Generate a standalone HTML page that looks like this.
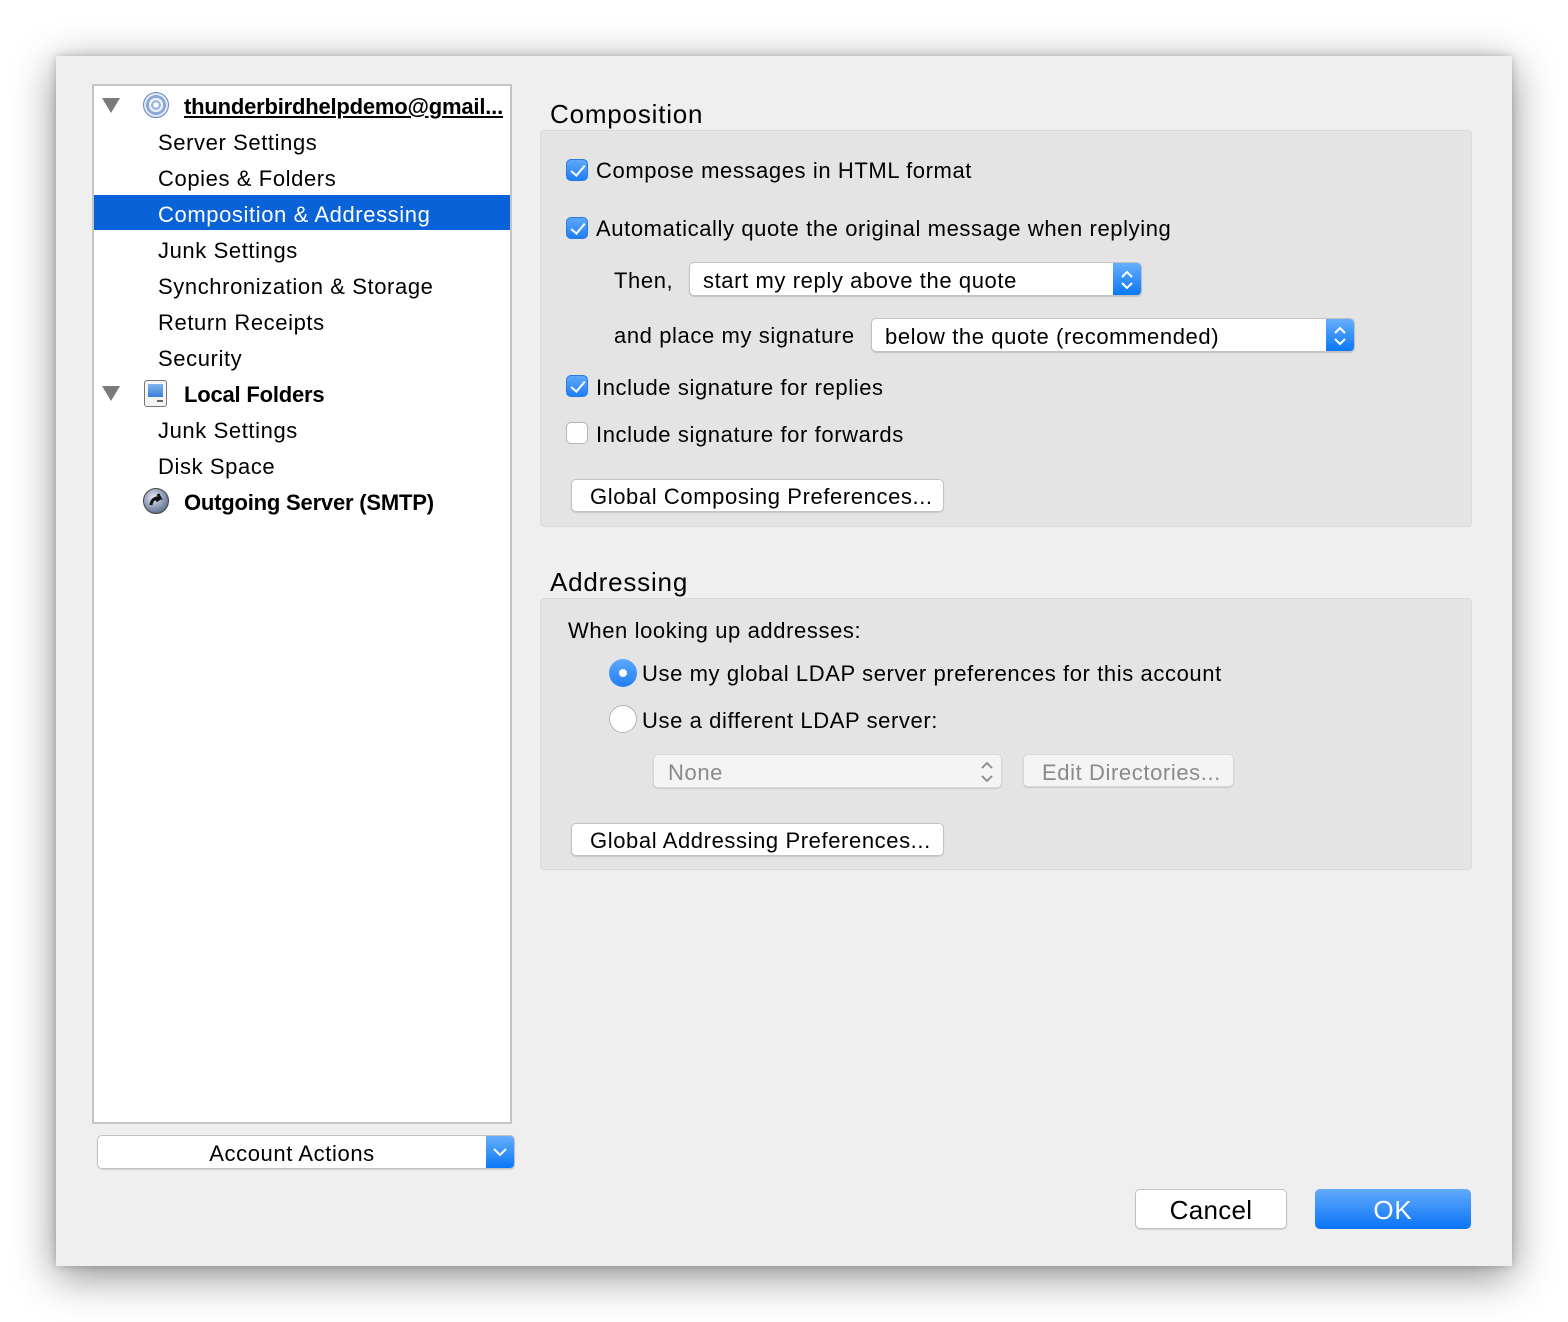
<!DOCTYPE html>
<html><head><meta charset="utf-8"><style>
*{margin:0;padding:0;box-sizing:border-box}
body{width:1568px;height:1322px;background:#fff;position:relative;overflow:hidden;font-family:"Liberation Sans",sans-serif;color:#000}
.win{position:absolute;left:56px;top:56px;width:1456px;height:1210px;background:#efefef;box-shadow:0 10px 40px rgba(0,0,0,.45),0 0 8px rgba(0,0,0,.2)}
.t{position:absolute;font-size:22px;line-height:26px;white-space:nowrap;letter-spacing:0.6px;margin-top:1px}
.b{font-weight:bold;letter-spacing:-0.2px}
.h{font-size:26px;line-height:30px;letter-spacing:0.8px}
.tree{position:absolute;left:92px;top:84px;width:420px;height:1040px;background:#fff;border:2px solid #c4c4c4}
.sel{position:absolute;left:94px;top:195px;width:416px;height:35px;background:#0a62d9}
.grp{position:absolute;background:#e4e4e4;border:1px solid #dadada;border-radius:4px}
.cb{position:absolute;width:22px;height:22px;border-radius:5px;background:#fff;border:1px solid #b5b5b5}
.cb.on{background:linear-gradient(#5fa7fb,#1e7ef8);border-color:#2a7ae6}
.cb.on::after{content:"";position:absolute;left:7px;top:2px;width:6px;height:12px;border:solid #fff;border-width:0 2.5px 2.5px 0;transform:rotate(40deg)}
.btn{position:absolute;background:#fff;border:1px solid #c2c2c2;border-radius:5px;box-shadow:0 1px 1px rgba(0,0,0,.12)}
.pop{position:absolute;background:#fff;border:1px solid #c2c2c2;border-radius:5px;box-shadow:0 1px 1px rgba(0,0,0,.15);overflow:hidden}
.arr{position:absolute;right:0;top:0;bottom:0;width:28px;background:linear-gradient(#66aefc,#0a77f7)}
.tri{position:absolute;width:0;height:0;border-left:9px solid transparent;border-right:9px solid transparent;border-top:15px solid #7a7a7a}
</style></head><body>
<div class="win"></div>
<div class="tree"></div>
<div class="sel"></div>

<div class="tri" style="left:102px;top:98px"></div>
<div style="position:absolute;left:143px;top:92px;width:26px;height:26px;border-radius:50%;background:radial-gradient(circle,#fff 0 15%,#9cb6e0 16% 28%,#e8effa 29% 42%,#8aa7d8 43% 58%,#dfe8f7 59% 72%,#7b98cc 73%);border:1px solid #6c86b8"></div>
<div class="t b" style="left:184px;top:93px;text-decoration:underline">thunderbirdhelpdemo@gmail...</div>
<div class="t" style="left:158px;top:129px">Server Settings</div>
<div class="t" style="left:158px;top:165px">Copies &amp; Folders</div>
<div class="t" style="left:158px;top:201px;color:#fff">Composition &amp; Addressing</div>
<div class="t" style="left:158px;top:237px">Junk Settings</div>
<div class="t" style="left:158px;top:273px">Synchronization &amp; Storage</div>
<div class="t" style="left:158px;top:309px">Return Receipts</div>
<div class="t" style="left:158px;top:345px">Security</div>
<div class="tri" style="left:102px;top:386px"></div>
<div style="position:absolute;left:144px;top:380px;width:23px;height:27px;border:1px solid #777;border-radius:3px;background:#f4f4f4"><div style="position:absolute;left:3px;top:3px;width:15px;height:13px;background:linear-gradient(#7fb3ee,#3a7fd8)"></div><div style="position:absolute;right:3px;bottom:4px;width:6px;height:2px;background:#666"></div></div>
<div class="t b" style="left:184px;top:381px">Local Folders</div>
<div class="t" style="left:158px;top:417px">Junk Settings</div>
<div class="t" style="left:158px;top:453px">Disk Space</div>
<div style="position:absolute;left:143px;top:488px;width:26px;height:26px;border-radius:50%;background:radial-gradient(circle at 40% 35%,#e4e9f2,#7a8aa6 60%,#3d4a63);border:1px solid #444"><svg width="24" height="24" style="position:absolute;left:0;top:0"><path d="M7 16 Q8 8 16 9 L14 5 M16 9 L12 12" stroke="#111" stroke-width="3" fill="none"/></svg></div>
<div class="t b" style="left:184px;top:489px">Outgoing Server (SMTP)</div>

<div class="btn" style="left:97px;top:1135px;width:418px;height:34px;overflow:hidden"><div class="arr" style="width:28px"><svg width="28" height="34"><path d="M8 13 L14 19 L20 13" stroke="#fff" stroke-width="2" fill="none"/></svg></div></div>
<div class="t" style="left:97px;top:1140px;width:390px;text-align:center">Account Actions</div>

<div class="t h" style="left:550px;top:98px">Composition</div>
<div class="grp" style="left:540px;top:130px;width:932px;height:397px"></div>
<div class="cb on" style="left:566px;top:159px"></div>
<div class="t" style="left:596px;top:157px">Compose messages in HTML format</div>
<div class="cb on" style="left:566px;top:217px"></div>
<div class="t" style="left:596px;top:215px">Automatically quote the original message when replying</div>
<div class="t" style="left:614px;top:267px">Then,</div>
<div class="pop" style="left:689px;top:262px;width:453px;height:34px"><div class="arr"><svg width="28" height="34"><path d="M9 14 L14 9 L19 14 M9 20 L14 25 L19 20" stroke="#fff" stroke-width="2" fill="none"/></svg></div></div>
<div class="t" style="left:703px;top:267px">start my reply above the quote</div>
<div class="t" style="left:614px;top:322px">and place my signature</div>
<div class="pop" style="left:871px;top:318px;width:484px;height:34px"><div class="arr"><svg width="28" height="34"><path d="M9 14 L14 9 L19 14 M9 20 L14 25 L19 20" stroke="#fff" stroke-width="2" fill="none"/></svg></div></div>
<div class="t" style="left:885px;top:323px">below the quote (recommended)</div>
<div class="cb on" style="left:566px;top:375px"></div>
<div class="t" style="left:596px;top:374px">Include signature for replies</div>
<div class="cb" style="left:566px;top:422px"></div>
<div class="t" style="left:596px;top:421px">Include signature for forwards</div>
<div class="btn" style="left:571px;top:479px;width:373px;height:33px"></div>
<div class="t" style="left:590px;top:483px">Global Composing Preferences...</div>

<div class="t h" style="left:550px;top:566px">Addressing</div>
<div class="grp" style="left:540px;top:598px;width:932px;height:272px"></div>
<div class="t" style="left:568px;top:617px">When looking up addresses:</div>
<div style="position:absolute;left:609px;top:659px;width:28px;height:28px;border-radius:50%;background:linear-gradient(#5fa7fb,#1e7ef8)"><div style="position:absolute;left:10px;top:10px;width:8px;height:8px;border-radius:50%;background:#fff"></div></div>
<div class="t" style="left:642px;top:660px">Use my global LDAP server preferences for this account</div>
<div style="position:absolute;left:609px;top:705px;width:28px;height:28px;border-radius:50%;background:#fff;border:1px solid #b5b5b5"></div>
<div class="t" style="left:642px;top:707px">Use a different LDAP server:</div>
<div class="btn" style="left:653px;top:754px;width:349px;height:34px;background:#f4f4f4;border-color:#d6d6d6"><svg width="20" height="30" style="position:absolute;right:4px;top:2px"><path d="M5 11 L10 6 L15 11 M5 19 L10 24 L15 19" stroke="#888" stroke-width="1.8" fill="none"/></svg></div>
<div class="t" style="left:668px;top:759px;color:#8a8a8a">None</div>
<div class="btn" style="left:1023px;top:754px;width:211px;height:33px;background:#f4f4f4;border-color:#d6d6d6"></div>
<div class="t" style="left:1042px;top:759px;color:#8a8a8a">Edit Directories...</div>
<div class="btn" style="left:571px;top:823px;width:373px;height:33px"></div>
<div class="t" style="left:590px;top:827px">Global Addressing Preferences...</div>

<div class="btn" style="left:1135px;top:1189px;width:152px;height:40px"></div>
<div class="t h" style="left:1135px;top:1194px;width:152px;text-align:center;letter-spacing:0.3px">Cancel</div>
<div style="position:absolute;left:1315px;top:1189px;width:156px;height:40px;border-radius:5px;background:linear-gradient(#62abfc,#0a74f7)"></div>
<div class="t h" style="left:1315px;top:1194px;width:156px;text-align:center;color:#fff">OK</div>
</body></html>
